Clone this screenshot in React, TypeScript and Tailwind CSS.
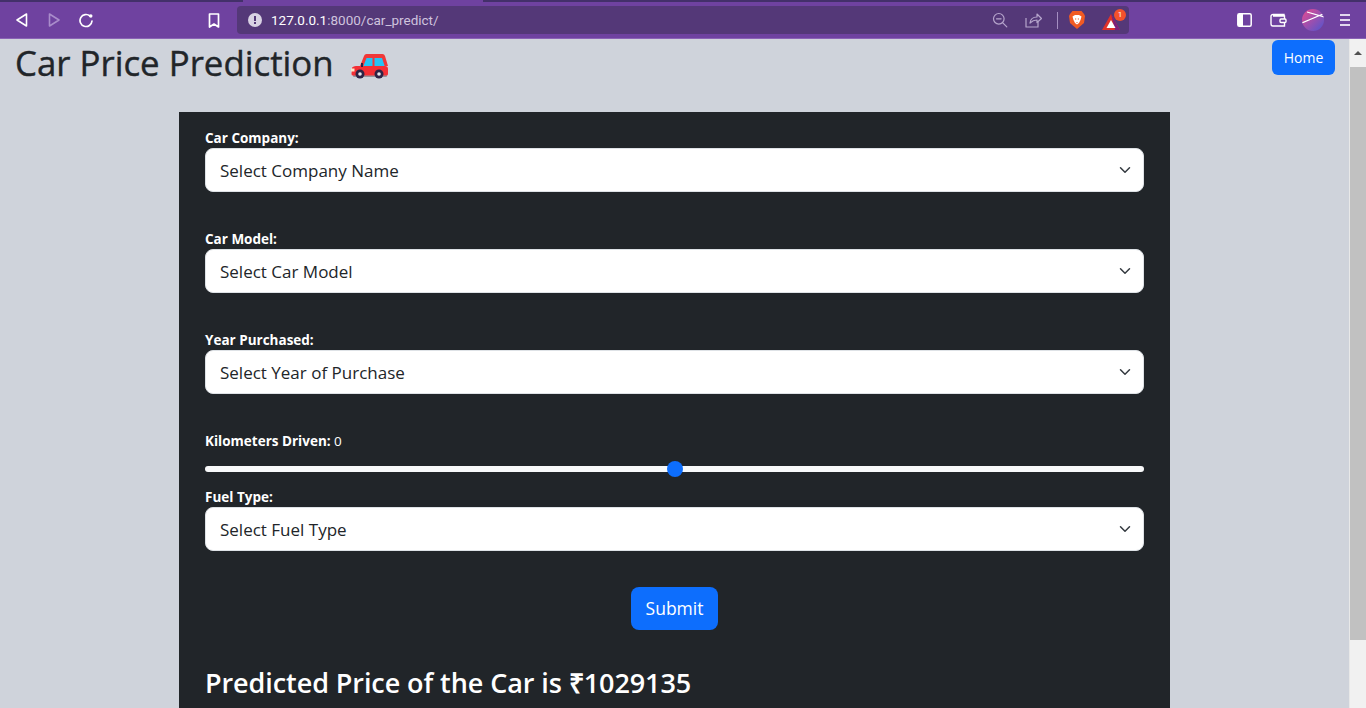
import { ChevronDown } from 'lucide-react'

const fields = [
  { label: 'Car Company:', placeholder: 'Select Company Name' },
  { label: 'Car Model:', placeholder: 'Select Car Model' },
  { label: 'Year Purchased:', placeholder: 'Select Year of Purchase' },
]

function SelectField({ label, placeholder, last }: { label: string; placeholder: string; last?: boolean }) {
  return (
    <div className={last ? 'mb-[36px]' : 'mb-[39px]'}>
      <label className="block h-[18px] text-[13.5px] font-bold leading-[17px] text-white">{label}</label>
      <div className="relative">
        <select className="block h-[44px] w-full appearance-none rounded-[8px] border border-[#dee2e6] bg-white pl-[14px] pr-[40px] pt-[2px] text-[17px] text-[#212529]">
          <option>{placeholder}</option>
        </select>
        <ChevronDown className="pointer-events-none absolute right-[10px] top-[13px] h-[18px] w-[18px] text-[#343a40]" strokeWidth={2} />
      </div>
    </div>
  )
}

function Toolbar() {
  return (
    <header className="relative h-[39px] flex-none border-b border-[#8a63b5] bg-[#6f42a0]">
      {/* tab strip */}
      <div className="flex h-[2px]">
        <div className="w-[243px] bg-[#43306a]" />
        <div className="w-[240px] bg-[#6f42a0]" />
        <div className="flex-1 bg-[#43306a]" />
      </div>
      <div className="flex h-[36px] items-center">
        {/* nav */}
        <div className="flex w-[237px] items-center pl-[14px]">
          <svg width="16" height="16" viewBox="0 0 16 16" fill="none" stroke="white" strokeWidth="1.6" strokeLinejoin="round">
            <path d="M12.5 2v12L3 8z" />
          </svg>
          <svg className="ml-[16px]" width="16" height="16" viewBox="0 0 16 16" fill="none" stroke="#a98ccb" strokeWidth="1.6" strokeLinejoin="round">
            <path d="M3.500 2v12L13 8z" />
          </svg>
          <svg className="ml-[16px]" width="16" height="16" viewBox="0 0 16 16" fill="none" stroke="white" strokeWidth="1.7" strokeLinecap="round">
            <path d="M14 9a6 6 0 1 1-2-5" />
            <circle cx="12.800" cy="4" r="1.700" fill="white" stroke="none" />
          </svg>
          <svg className="ml-[113px]" width="14" height="17" viewBox="0 0 14 17" fill="none" stroke="white" strokeWidth="1.7" strokeLinejoin="round">
            <path d="M2.500 2h9v13l-4.500-3-4.500 3z" />
          </svg>
        </div>
        {/* address bar */}
        <div className="flex h-[28px] w-[892px] items-center rounded-[4px] bg-[#543878] pl-[11px]">
          <svg width="14" height="14" viewBox="0 0 14 14">
            <circle cx="7" cy="7" r="7" fill="#d9d2e4" />
            <rect x="6" y="3" width="2" height="5" fill="#543878" />
            <rect x="6" y="9" width="2" height="2" fill="#543878" />
          </svg>
          <span className="ml-[9px] font-['Roboto',sans-serif] text-[13.500px] text-white">
            127.0.0.1<span className="text-[#cfc3de]">:8000/car_predict/</span>
          </span>
          <div className="ml-auto flex items-center">
            <svg width="16" height="16" viewBox="0 0 16 16" fill="none" stroke="#b6a5cc" strokeWidth="1.2" strokeLinecap="round">
              <circle cx="6.800" cy="6.800" r="5.300" />
              <path d="M4.500 6.800h4.600M10.800 10.800l4 4" />
            </svg>
            <svg className="ml-[17px]" width="17" height="16" viewBox="0 0 17 16" fill="none" stroke="#b6a5cc" strokeWidth="1.2" strokeLinejoin="round">
              <path d="M1 6v9h12v-5" />
              <path d="M5 11c.5-4 3.500-6 7-6V2l4.500 4.500L12 10.500V8C9 8 7 9 5 11z" />
            </svg>
            <div className="ml-[15px] h-[17px] w-px bg-[#a58fc2]" />
            <svg className="ml-[11px]" width="16" height="18" viewBox="0 0 16 18">
              <path d="M3.500 0h9L15 3l1 2-1 7-7 6-7-6-1-7 1-2z" fill="#f15a22" />
              <path d="M3.500 5.500L6 4h4l2.500 1.500-1 3.500-1.500 3-2 1.500L6 12 4.500 9z" fill="#fff" />
              <path d="M6 7.500h1.200v1H6zM8.800 7.500H10v1H8.800zM7 11h2l-1 1z" fill="#f15a22" />
            </svg>
            <div className="relative ml-[17px] mr-[9px] h-[20px] w-[18px]">
              <svg width="18" height="16" viewBox="0 0 18 16" className="mt-[4px]">
                <path d="M9 0L18 16H0z" fill="#e0322a" />
                <path d="M9 0L18 16h-5z" fill="#7b1e7a" />
                <path d="M9 6l4.500 8h-9z" fill="white" />
              </svg>
              <span className="absolute right-[-6px] top-[-1px] flex h-[12px] w-[12px] items-center justify-center rounded-full bg-[#f4512c] font-['Roboto',sans-serif] text-[8px] text-white">1</span>
            </div>
          </div>
        </div>
        {/* right icons */}
        <div className="flex flex-1 items-center pl-[108px]">
          <svg width="15" height="14" viewBox="0 0 15 14">
            <rect x="0.800" y="0.800" width="13.400" height="12.400" rx="1.500" fill="none" stroke="white" strokeWidth="1.500" />
            <rect x="1" y="1" width="5" height="12" fill="white" />
          </svg>
          <svg className="ml-[18px]" width="17" height="14" viewBox="0 0 17 14" fill="none" stroke="white" strokeWidth="1.400">
            <path d="M14 3V1.500H3A2 2 0 0 0 1 3.500V11a2 2 0 0 0 2 2h11.500V3H3" />
            <rect x="10" y="6" width="6" height="3.500" rx="1" fill="#6f42a0" />
          </svg>
          <div className="relative ml-[15px] h-[22px] w-[22px] overflow-hidden rounded-full bg-[linear-gradient(to_bottom_right,#ea4a8e,#4f55cf)]">
            <svg className="absolute inset-0" width="22" height="22" viewBox="0 0 22 22" fill="none" stroke="white" strokeWidth="1.200">
              <path d="M0 14L21 5M5 3l17 5" />
            </svg>
          </div>
          <div className="ml-[16px] flex w-[10px] flex-col gap-[3px]">
            <div className="h-[2px] bg-[#e2d8ee]" />
            <div className="h-[2px] bg-[#e2d8ee]" />
            <div className="h-[2px] bg-[#e2d8ee]" />
          </div>
        </div>
      </div>
    </header>
  )
}

function Scrollbar() {
  return (
    <div className="flex w-[17px] flex-none flex-col border-l border-[#e8e8e8] bg-[#f1f1f1]">
      <div className="flex h-[28px] items-center justify-center">
        <div className="h-0 w-0 border-x-[4px] border-b-[4px] border-x-transparent border-b-[#505050]" />
      </div>
      <div className="h-[573px] bg-[#c1c1c1]" />
    </div>
  )
}

function App() {
  return (
    <div className="flex h-[708px] w-full flex-col overflow-hidden bg-[#cfd3db] font-['Open_Sans',sans-serif]">
      <Toolbar />
      <div className="flex min-h-0 flex-1">
        <main className="min-w-0 flex-1 overflow-hidden">
          <div className="flex h-[49px] items-start justify-between pl-[15px] pr-[14px]">
            <h1 className="flex items-center text-[34.800px] font-medium leading-[47px] text-[#212529] [-webkit-text-stroke:0.4px_#212529]">
              Car Price Prediction
              <svg className="ml-[17px] mt-[8px]" width="37" height="25" viewBox="0 0 37 25">
                <rect x="2" y="20" width="34" height="3" rx="1" fill="#94949c" />
                <path d="M9 12l4-10a3 3 0 0 1 3-2h15a3 3 0 0 1 3 2l3 10z" fill="#f03838" />
                <path d="M12 13l3.500-9h6v9zM23.500 13V4h7.500l3 9z" fill="#25c4f5" />
                <path d="M1 14c0-1 2-2 4-2h29a3 3 0 0 1 3 3v5a1.500 1.500 0 0 1-1.500 1.500H2a1.500 1.500 0 0 1-1.500-1.500z" fill="#f42f35" />
                <rect x="0" y="14.500" width="3.500" height="3" fill="#fde8c8" />
                <rect x="10" y="9" width="2" height="4" fill="#2d2345" />
                <circle cx="9" cy="20" r="4.500" fill="#2d2345" />
                <circle cx="9" cy="20" r="1.800" fill="#e8e8ee" />
                <circle cx="28" cy="20" r="4.500" fill="#2d2345" />
                <circle cx="28" cy="20" r="1.800" fill="#e8e8ee" />
              </svg>
            </h1>
            <button className="mt-px h-[35px] w-[63px] rounded-[6px] bg-[#0d6efd] text-[14px] text-white">Home</button>
          </div>
          <section className="mx-auto mt-[24px] h-[700px] w-[991px] bg-[#212529] px-[26px] pt-[18px]">
            {fields.map((f) => (
              <SelectField key={f.label} label={f.label} placeholder={f.placeholder} />
            ))}
            <div className="h-[19px] text-[13.500px] leading-[17px] text-white">
              <span className="font-bold">Kilometers Driven:</span> 0
            </div>
            <input
              type="range"
              defaultValue={50}
              className="mb-[17px] mt-[14px] block h-[6px] w-full appearance-none rounded-full bg-[#f8f9fa] [&::-webkit-slider-thumb]:h-[16px] [&::-webkit-slider-thumb]:w-[16px] [&::-webkit-slider-thumb]:appearance-none [&::-webkit-slider-thumb]:rounded-full [&::-webkit-slider-thumb]:bg-[#0d6efd]"
            />
            <SelectField label="Fuel Type:" placeholder="Select Fuel Type" last />
            <div className="flex justify-center">
              <button className="h-[43px] w-[87px] rounded-[8px] bg-[#0d6efd] text-[17.500px] text-white">Submit</button>
            </div>
            <h2 className="mt-[33px] text-[27px] font-semibold leading-[40px] tracking-[-0.08px] text-white">Predicted Price of the Car is ₹1029135</h2>
          </section>
        </main>
        <Scrollbar />
      </div>
    </div>
  )
}

export default App
